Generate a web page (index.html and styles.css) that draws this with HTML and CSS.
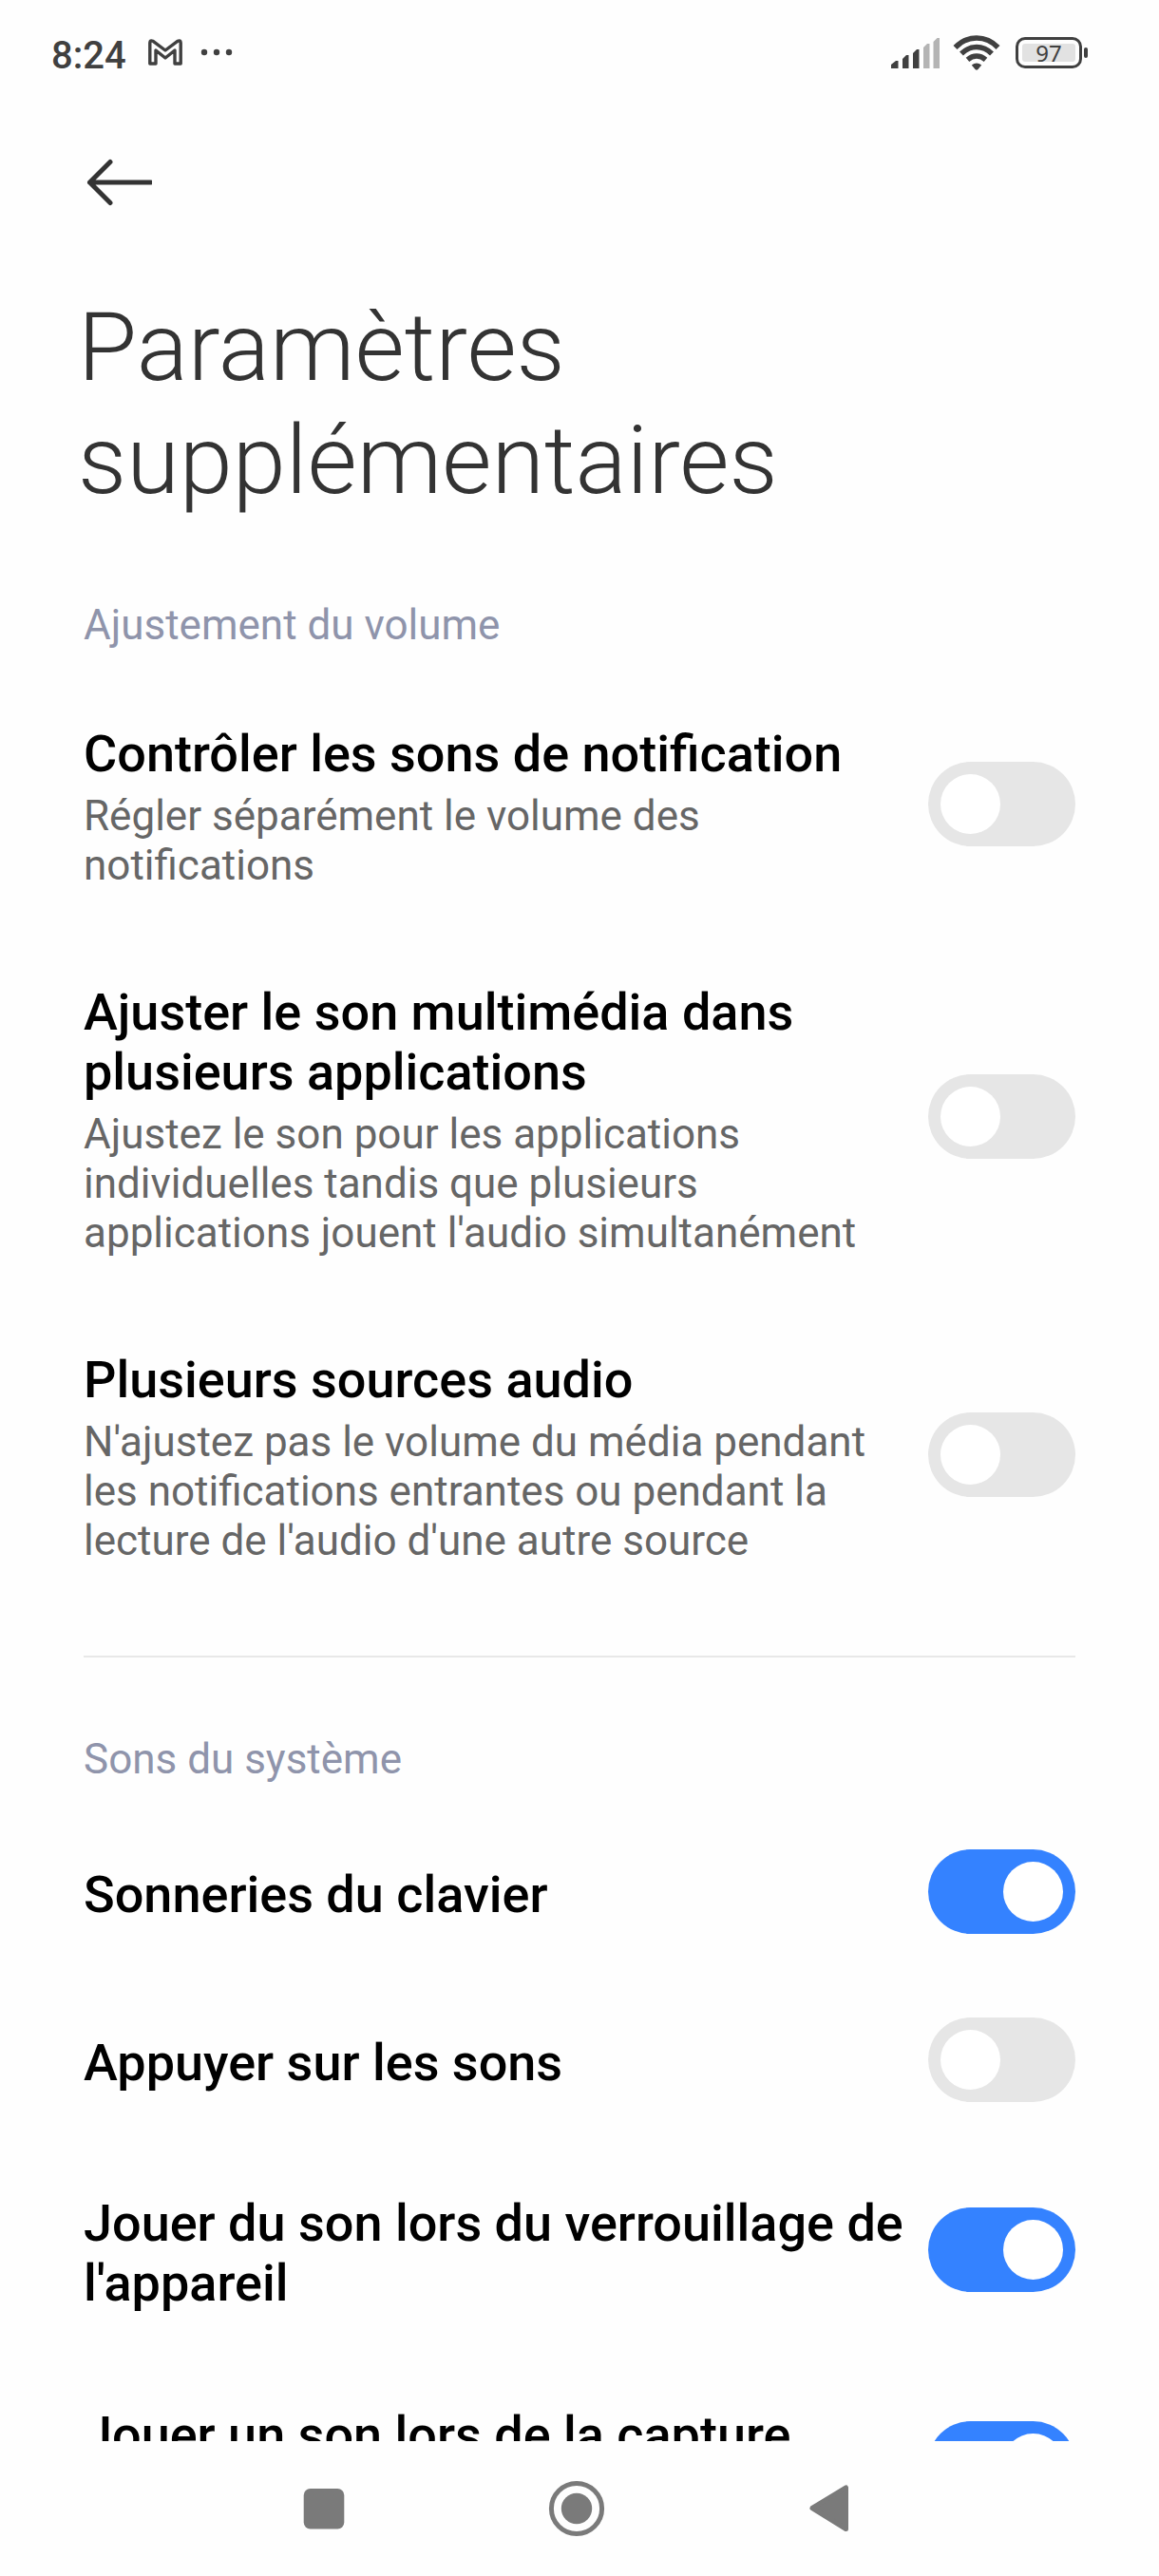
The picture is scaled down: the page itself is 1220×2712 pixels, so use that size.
FILE: index.html
```
<!DOCTYPE html>
<html lang="fr">
<head>
  <meta charset="UTF-8">
  <title>Paramètres supplémentaires</title>
  <link rel="stylesheet" href="styles.css">
</head>
<body>
  <div class="statusbar">
    <span class="time">8:24</span>
    <svg class="gmail" width="36" height="28" viewBox="0 0 36 28">
      <path d="M1.800 4Q2 1 4.800 2.200L18 12L31.200 2.200Q34 1 34.200 4V26H28V12L18 20L8 12V26H1.800Z" fill="none" stroke="#404040" stroke-width="3.400" stroke-linejoin="round"/>
    </svg>
    <svg class="dots" width="34" height="8" viewBox="0 0 34 8">
      <circle cx="4" cy="4" r="3.2"/>
      <circle cx="17" cy="4" r="3.2"/>
      <circle cx="30" cy="4" r="3.2"/>
    </svg>
    <svg class="signal" width="51" height="32" viewBox="0 0 51 32">
      <path d="M0 32V28L5 24H7.500V32Z"/>
      <path d="M12 32V22L16 18H18.500V32Z"/>
      <path d="M23 32V16L27 12H29.500V32Z"/>
      <path class="off" d="M34 32V10L38 6H40.500V32Z"/>
      <path class="off" d="M44.500 32V4L48.500 0H51V32Z"/>
    </svg>
    <svg class="wifi" width="50" height="37" viewBox="0 0 50 37">
      <path d="M2.500 13Q12 3 25 3T47.500 13"/>
      <path d="M9 19.500Q16 12.500 25 12.500T41 19.500"/>
      <path d="M15.500 25.800Q20 22 25 22T34.500 25.800"/>
      <path class="dot" d="M19.800 31.500Q25 27.500 30.200 31.500L26.500 36Q25 37.500 23.500 36Z"/>
    </svg>
    <div class="battery"><span class="level">97</span></div>
    <div class="battery-tip"></div>
  </div>

  <main>
    <svg class="back" width="72" height="52" viewBox="0 0 72 52">
      <path d="M28 4.500L6.500 26L28 47.500M6.500 26H70.500"/>
    </svg>

    <h1>Paramètres<br>supplémentaires</h1>

    <section class="volume">
      <h2>Ajustement du volume</h2>
      <div class="row">
        <div class="text">
          <h3>Contrôler les sons de notification</h3>
          <p>Régler séparément le volume des<br>notifications</p>
        </div>
        <div class="switch"></div>
      </div>
      <div class="row">
        <div class="text">
          <h3>Ajuster le son multimédia dans<br>plusieurs applications</h3>
          <p>Ajustez le son pour les applications<br>individuelles tandis que plusieurs<br>applications jouent l'audio simultanément</p>
        </div>
        <div class="switch"></div>
      </div>
      <div class="row">
        <div class="text">
          <h3>Plusieurs sources audio</h3>
          <p>N'ajustez pas le volume du média pendant<br>les notifications entrantes ou pendant la<br>lecture de l'audio d'une autre source</p>
        </div>
        <div class="switch"></div>
      </div>
    </section>

    <section class="system">
      <h2>Sons du système</h2>
      <div class="row">
        <div class="text"><h3>Sonneries du clavier</h3></div>
        <div class="switch on"></div>
      </div>
      <div class="row">
        <div class="text"><h3>Appuyer sur les sons</h3></div>
        <div class="switch"></div>
      </div>
      <div class="row">
        <div class="text"><h3>Jouer du son lors du verrouillage de<br>l'appareil</h3></div>
        <div class="switch on"></div>
      </div>
      <div class="row last">
        <div class="text"><h3>Jouer un son lors de la capture</h3></div>
        <div class="switch on"></div>
      </div>
    </section>
  </main>

  <nav>
    <svg width="60" height="60" viewBox="0 0 60 60">
      <rect x="8.700" y="9" width="42.600" height="42.500" rx="7"/>
    </svg>
    <svg width="60" height="60" viewBox="0 0 60 60">
      <circle class="ring" cx="30" cy="30" r="26.600"/>
      <circle cx="30" cy="30" r="16.200"/>
    </svg>
    <svg width="60" height="60" viewBox="0 0 60 60">
      <path class="triangle" d="M12 29.500L47.500 8V51.500Z"/>
    </svg>
  </nav>
</body>
</html>
```
FILE: styles.css
```
* {
  box-sizing: border-box;
}

body {
  margin: 0;
  height: 2712px;
  display: flex;
  flex-direction: column;
  overflow: hidden;
  background: #fefefe;
  font-family: Roboto, sans-serif;
}

h1, h2, h3, p {
  margin: 0;
}

.statusbar {
  flex: none;
  height: 110px;
  padding: 0 75px 0 54px;
  display: flex;
  align-items: center;
  color: #404040;
  fill: #404040;
}

.time {
  margin-top: 6px;
  width: 102px;
  font-size: 40px;
  font-weight: 500;
}

.dots {
  margin-left: 19px;
}

.signal {
  margin-left: auto;
  margin-top: 2px;
}

.signal .off {
  fill: #b4b4b4;
}

.wifi {
  margin-left: 14px;
}

.wifi path {
  fill: none;
  stroke: #404040;
  stroke-width: 5.5;
}

.wifi .dot {
  fill: #404040;
  stroke: none;
}

.battery {
  width: 70px;
  height: 33px;
  margin-left: 16px;
  padding: 4px;
  border: 3.5px solid #404040;
  border-radius: 10px;
}

.level {
  display: block;
  height: 19px;
  border-radius: 3px;
  background: #e2e2e2;
  font: 24px/20px "Noto Sans", sans-serif;
  text-align: center;
}

.battery-tip {
  width: 4px;
  height: 11px;
  margin-left: 2px;
  border-radius: 2px;
  background: #404040;
}

main {
  height: 2460px;
  padding: 0 88px;
  overflow: hidden;
}

.back {
  display: block;
  margin-top: 56px;
  fill: none;
  stroke: #333;
  stroke-width: 5;
  stroke-linecap: round;
  stroke-linejoin: round;
}

h1 {
  margin: 88px 0 0 -6px;
  font-size: 101px;
  font-weight: 300;
  line-height: 119px;
  color: #333;
}

h2 {
  font-size: 44px;
  font-weight: 400;
  line-height: 52px;
  color: #8f94ab;
}

.volume {
  height: 1201px;
  padding-top: 88px;
  border-bottom: 2px solid #e8e8e8;
}

.volume h2 {
  margin-bottom: 29px;
}

.system {
  padding-top: 81px;
}

.system h2 {
  margin-bottom: 28px;
}

.row {
  min-height: 177px;
  padding: 48.5px 0;
  display: flex;
  align-items: center;
  justify-content: space-between;
}

/* runs under the navigation bar */
.row.last {
  height: 224px;
  align-items: flex-start;
}

.row.last .switch {
  margin-top: 17px;
}

.text {
  white-space: nowrap;
}

h3 {
  font-size: 54px;
  font-weight: 500;
  line-height: 63px;
  color: #000;
}

p {
  margin-top: 8px;
  font-size: 44px;
  line-height: 52px;
  color: #666;
}

.switch {
  flex: none;
  width: 155px;
  height: 89px;
  margin: -20px 0 -14px;
  padding: 13px;
  display: flex;
  border-radius: 45px;
  background: #e6e6e6;
}

.switch::before {
  content: "";
  width: 63px;
  height: 63px;
  border-radius: 50%;
  background: #fff;
}

.switch.on {
  justify-content: flex-end;
  background: #3482ff;
}

nav {
  flex: none;
  height: 142px;
  padding: 0 317px 0 311px;
  display: flex;
  align-items: center;
  justify-content: space-between;
  fill: #7a7a7a;
}

.ring {
  fill: none;
  stroke: #7a7a7a;
  stroke-width: 5;
}

.triangle {
  stroke: #7a7a7a;
  stroke-width: 5;
  stroke-linejoin: round;
}
```
